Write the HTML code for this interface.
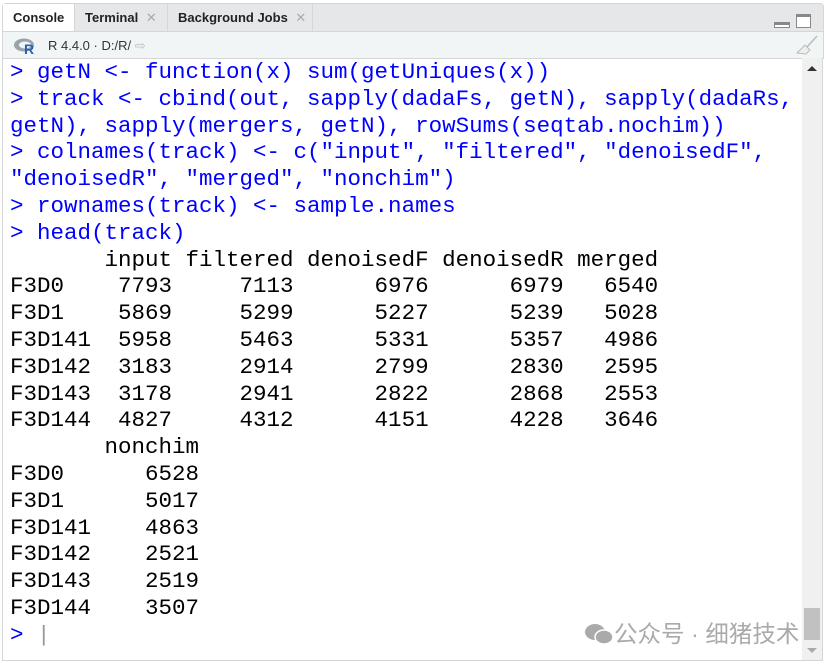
<!DOCTYPE html>
<html><head><meta charset="utf-8"><style>
body{margin:0;width:825px;height:664px;overflow:hidden;background:#fff;font-family:"Liberation Sans",sans-serif;position:relative}
.tabbar{position:absolute;left:2px;top:3px;width:820px;height:27px;background:#e6e7e8;border:1px solid #d4d6d8;border-bottom:none;border-radius:4px 4px 0 0}
.tab{position:absolute;top:0;height:27px;font-size:13px;font-weight:bold;line-height:27px;color:#222;border-right:1px solid #d4d6d8;padding-left:10px;box-sizing:border-box}
.tab .x{color:#aaa;font-weight:normal;margin-left:4px}
.toolbar{position:absolute;left:2px;top:31px;width:820px;height:26px;background:#f2f5f6;border:1px solid #d4d6d8;border-top:1px solid #d4d6d8;border-bottom:1px solid #d4d6d8}
.console{position:absolute;left:2px;top:58px;width:799px;height:602px;border-left:1px solid #d4d6d8;border-bottom:1px solid #d4d6d8}
pre{margin:0;position:absolute;left:10px;top:59px;font-family:"Liberation Mono",monospace;font-size:22.5px;line-height:26.8px;color:#000}
.b{color:#0000ff}
.sb{position:absolute;left:802px;top:58px;width:20px;height:602px;background:#f0f0f0;border-right:1px solid #d4d6d8;border-bottom:1px solid #d4d6d8}
</style></head><body>
<div class="tabbar">
 <div class="tab" style="left:0;width:72px;background:#fff;height:28px">Console</div>
 <div class="tab" style="left:72px;width:93px">Terminal <span class="x">✕</span></div>
 <div class="tab" style="left:165px;width:145px">Background Jobs <span class="x">✕</span></div>
 <div style="position:absolute;left:771px;top:18px;width:16px;height:6px;border:1px solid #888;border-top:3px solid #888;box-sizing:border-box;background:#fff"></div>
 <div style="position:absolute;left:793px;top:10px;width:15px;height:14px;border:1px solid #888;border-top:3px solid #888;box-sizing:border-box;background:#fff"></div>
</div>
<div class="toolbar">
 <svg style="position:absolute;left:10px;top:5px" width="24" height="18"><ellipse cx="11" cy="8" rx="10" ry="6.5" fill="#9aa3ab"/><ellipse cx="12" cy="8" rx="6" ry="3.5" fill="#f2f5f6"/><text x="11" y="17" font-family="Liberation Sans" font-weight="bold" font-size="14" fill="#2264b5">R</text></svg>
 <span style="position:absolute;left:45px;top:6px;font-size:13px;color:#333">R 4.4.0 · D:/R/ <span style="color:#bbb">⇨</span></span>
 <svg style="position:absolute;left:792px;top:2px" width="24" height="22"><path d="M22 2 L12 13" stroke="#bbb" stroke-width="1.5"/><path d="M10 11 L15 16 L11 20 L2 19 Z" fill="#eee" stroke="#bbb"/></svg>
</div>
<div class="console"></div>
<div class="sb">
 <div style="position:absolute;left:5px;top:8px;border:5px solid transparent;border-bottom:5px solid #333;border-top:none;width:0"></div>
 <div style="position:absolute;left:2px;top:550px;width:16px;height:32px;background:#c1c1c1"></div>
 <div style="position:absolute;left:5px;top:590px;border:5px solid transparent;border-top:5px solid #aaa;border-bottom:none;width:0"></div>
</div>
<pre><span class="b">&gt; getN &lt;- function(x) sum(getUniques(x))
&gt; track &lt;- cbind(out, sapply(dadaFs, getN), sapply(dadaRs,
getN), sapply(mergers, getN), rowSums(seqtab.nochim))
&gt; colnames(track) &lt;- c("input", "filtered", "denoisedF",
"denoisedR", "merged", "nonchim")
&gt; rownames(track) &lt;- sample.names
&gt; head(track)</span>
       input filtered denoisedF denoisedR merged
F3D0    7793     7113      6976      6979   6540
F3D1    5869     5299      5227      5239   5028
F3D141  5958     5463      5331      5357   4986
F3D142  3183     2914      2799      2830   2595
F3D143  3178     2941      2822      2868   2553
F3D144  4827     4312      4151      4228   3646
       nonchim
F3D0      6528
F3D1      5017
F3D141    4863
F3D142    2521
F3D143    2519
F3D144    3507
<span class="b">&gt; <span style="color:#999;font-weight:normal">|</span></span></pre>
<div style="position:absolute;left:584px;top:615px;font-family:'Liberation Sans','Noto Sans CJK SC',sans-serif;font-size:23.5px;color:#aaa;white-space:nowrap">
<svg width="30" height="24" style="vertical-align:-4px"><ellipse cx="11" cy="10" rx="10" ry="8" fill="#aaa"/><ellipse cx="20" cy="15" rx="9" ry="7" fill="#aaa" stroke="#fff" stroke-width="1.5"/></svg>公众号 · 细猪技术</div>
</body></html>
